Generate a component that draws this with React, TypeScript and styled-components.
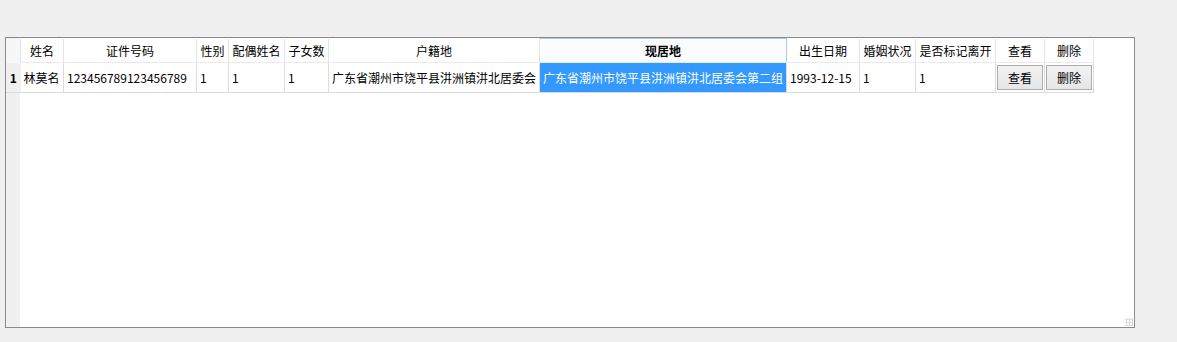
import styled, { createGlobalStyle } from "styled-components";

const GlobalStyle = createGlobalStyle`
  html, body {
    margin: 0;
    padding: 0;
    background: #f0f0f0;
  }
  body {
    font-family: "Noto Sans CJK SC", "Microsoft YaHei", sans-serif;
    font-size: 12px;
    color: #000;
  }
`;

interface Column {
  key: string;
  title: string;
  width: number;
}

const columns: Column[] = [
  { key: "name", title: "姓名", width: 43 },
  { key: "idNo", title: "证件号码", width: 133 },
  { key: "gender", title: "性别", width: 32 },
  { key: "spouse", title: "配偶姓名", width: 56 },
  { key: "children", title: "子女数", width: 44 },
  { key: "hukou", title: "户籍地", width: 211 },
  { key: "address", title: "现居地", width: 246 },
  { key: "birth", title: "出生日期", width: 73 },
  { key: "marriage", title: "婚姻状况", width: 56 },
  { key: "left", title: "是否标记离开", width: 80 },
  { key: "view", title: "查看", width: 49 },
  { key: "del", title: "删除", width: 49 },
];

const rows = [
  {
    name: "林莫名",
    idNo: "123456789123456789",
    gender: "1",
    spouse: "1",
    children: "1",
    hukou: "广东省潮州市饶平县汫洲镇汫北居委会",
    address: "广东省潮州市饶平县汫洲镇汫北居委会第二组",
    birth: "1993-12-15",
    marriage: "1",
    left: "1",
  },
];

const SELECTED_COL = "address";

const Page = styled.div`
  padding: 37px 0 0 5px;
  height: 305px;
`;

const Frame = styled.div`
  box-sizing: border-box;
  width: 1130px;
  height: 291px;
  border: 1px solid #8a8a8a;
  background: linear-gradient(to right, #f0f0f0 14px, #fff 14px);
  overflow: hidden;
  position: relative;
`;

const Grid = styled.table`
  border-collapse: collapse;
  table-layout: fixed;
  white-space: nowrap;
`;

const Corner = styled.th`
  width: 14px;
  padding: 0;
  background: #f7f7f7;
  border-right: 1px solid #e4e4e4;
`;

const HeadCell = styled.th<{ $active?: boolean }>`
  height: 23px;
  padding: 0;
  background: ${({ $active }) => ($active ? "#fbfcfe" : "#fff")};
  font-weight: ${({ $active }) => ($active ? 700 : 400)};
  text-align: center;
  border-right: 1px solid ${({ $active }) => ($active ? "#b9c8d8" : "#e4e4e4")};
  border-left: ${({ $active }) => ($active ? "1px solid #b9c8d8" : "none")};
  border-top: ${({ $active }) => ($active ? "1px solid #b9c8d8" : "none")};
  border-bottom: 1px solid #eaeaea;
  overflow: hidden;
`;

const RowHead = styled.td`
  padding: 0;
  font-weight: 700;
  text-align: center;
  background: #f0f0f0;
  border-bottom: 1px solid #dcdcdc;
`;

const Cell = styled.td<{ $selected?: boolean }>`
  height: 30px;
  padding: 0 3px;
  box-sizing: border-box;
  background: ${({ $selected }) => ($selected ? "#3399ff" : "#fff")};
  color: ${({ $selected }) => ($selected ? "#fff" : "#000")};
  border-right: 1px solid #dcdcdc;
  border-bottom: 1px solid #dcdcdc;
  overflow: hidden;
`;

const ButtonCell = styled.td`
  padding: 0 1px;
  text-align: center;
  background: #fff;
  border-right: 1px solid #dcdcdc;
  border-bottom: 1px solid #dcdcdc;
`;

const GridButton = styled.button`
  box-sizing: border-box;
  width: 46px;
  height: 25px;
  padding: 0;
  font-family: inherit;
  font-size: 12px;
  color: #000;
  background: linear-gradient(#f2f2f2, #e6e6e6);
  border: 1px solid #adadad;
  border-radius: 0;
`;

// resize grip in the lower right corner
const Grip = styled.div`
  position: absolute;
  right: 1px;
  bottom: 1px;
  width: 8px;
  height: 8px;
  background-image: radial-gradient(circle, #dcdcdc 1px, transparent 1.2px);
  background-size: 3px 3px;
`;

const App = () => {
  return (
    <>
      <GlobalStyle />
      <Page>
        <Frame>
          <Grid>
            <colgroup>
              <col style={{ width: 14 }} />
              {columns.map((c) => (
                <col key={c.key} style={{ width: c.width }} />
              ))}
            </colgroup>
            <thead>
              <tr>
                <Corner />
                {columns.map((c) => (
                  <HeadCell key={c.key} $active={c.key === SELECTED_COL}>
                    {c.title}
                  </HeadCell>
                ))}
              </tr>
            </thead>
            <tbody>
              {rows.map((row, i) => (
                <tr key={i}>
                  <RowHead>{i + 1}</RowHead>
                  {columns.map((c) => {
                    if (c.key === "view" || c.key === "del") {
                      return (
                        <ButtonCell key={c.key}>
                          <GridButton>{c.title}</GridButton>
                        </ButtonCell>
                      );
                    }
                    return (
                      <Cell key={c.key} $selected={c.key === SELECTED_COL}>
                        {row[c.key as keyof typeof row]}
                      </Cell>
                    );
                  })}
                </tr>
              ))}
            </tbody>
          </Grid>
          <Grip />
        </Frame>
      </Page>
    </>
  );
};

export default App;
